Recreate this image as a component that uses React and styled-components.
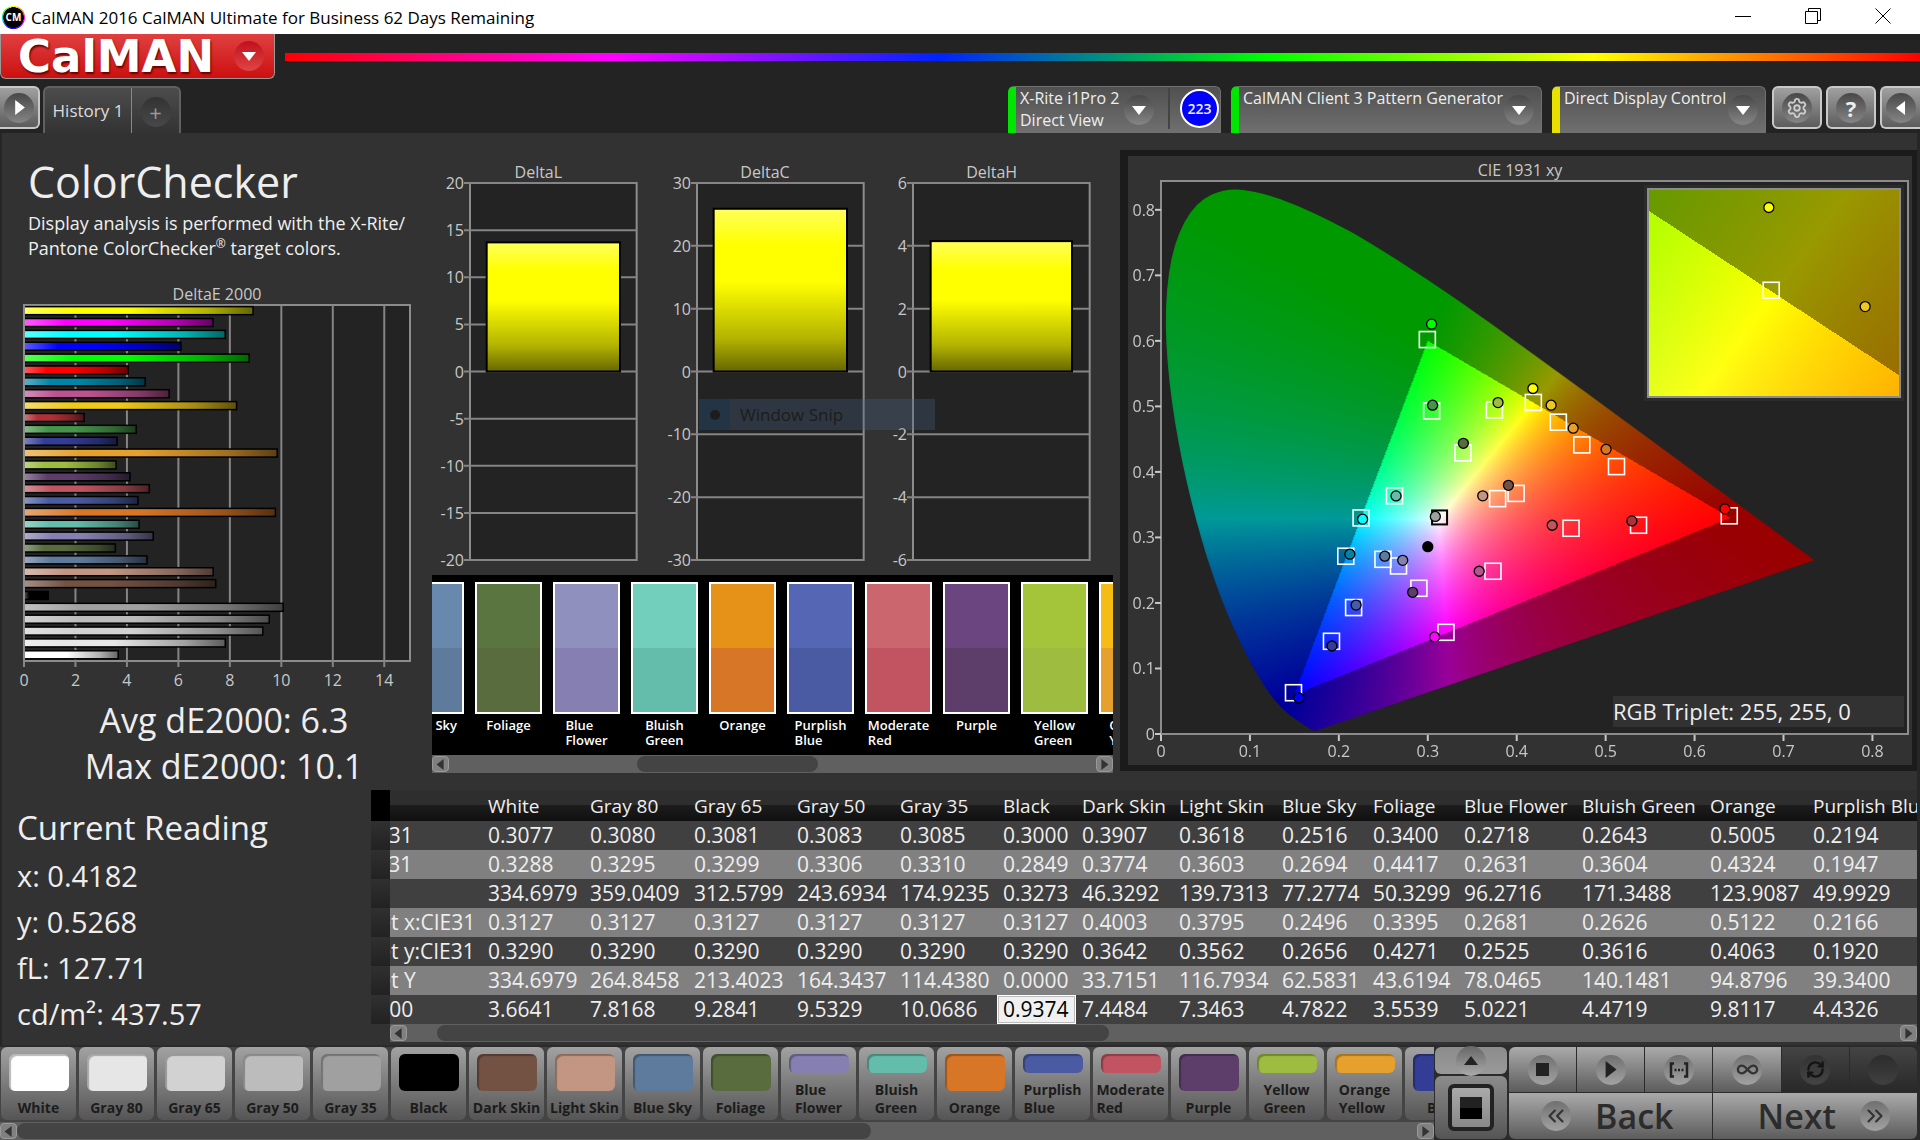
import React, { useEffect, useRef } from 'react'
import styled, { createGlobalStyle } from 'styled-components'
import { ChevronsLeft, ChevronsRight, Infinity as Loop, RefreshCw, Settings } from 'lucide-react'

const Global = createGlobalStyle`
    * { box-sizing: border-box; }
    body {
        margin: 0;
        background: #323232;
        font-family: "Open Sans", "Noto Sans", sans-serif;
        color: #eee;
        overflow-x: hidden;
    }
    button { font: inherit; color: inherit; border: 0; padding: 0; cursor: pointer; }
    svg text { fill: #c8c8c8; font-size: 16px; }
`

const Page = styled.div`
    display: flex;
    flex-direction: column;
    min-height: 100vh;
    overflow: hidden;
`

/* ---------- title bar ---------- */
const TitleBar = styled.header`
    display: flex;
    align-items: center;
    height: 34px;
    padding-left: 2px;
    background: #fff;
    color: #000;
    font-size: 17px;
`
const AppBadge = styled.span`
    display: flex;
    align-items: center;
    justify-content: center;
    width: 23px;
    height: 23px;
    margin-right: 6px;
    border-radius: 50%;
    background: radial-gradient(#000 62%, transparent 64%),
        conic-gradient(#ff0, #f60, #f0f, #60f, #00f, #0cf, #0f0, #ff0);
    color: #fff;
    font-size: 10px;
    font-weight: 700;
`
const WindowButtons = styled.div`
    display: flex;
    margin-left: auto;
    padding-right: 2px;
`
const WindowButton = styled.button`
    width: 70px;
    height: 34px;
    background: none;
`

/* ---------- top strip ---------- */
const Top = styled.div`
    background: #232323;
`
const BrandRow = styled.div`
    display: flex;
    align-items: center;
    height: 45px;
`
const Brand = styled.button`
    display: flex;
    align-items: center;
    justify-content: space-between;
    width: 275px;
    height: 45px;
    margin-right: 10px;
    padding: 0 10px 0 17px;
    border: 1px solid #999;
    border-top: 0;
    border-radius: 0 0 6px 6px;
    background: linear-gradient(#e04040, #cc1010);
    color: #fff;
    font-family: "DejaVu Sans", sans-serif;
    font-size: 45px;
    line-height: 43px;
    font-weight: 700;
    text-shadow: 1px 2px 2px #600;
`
const Rainbow = styled.div`
    flex: 1;
    height: 8px;
    background: linear-gradient(90deg, #f00, #f0f 20%, #02f 40%, #0f0 60%, #ff0 80%, #f00);
`
const Round = styled.span`
    display: flex;
    flex: none;
    align-items: center;
    justify-content: center;
    width: 30px;
    height: 30px;
    border-radius: 50%;
    background: ${p => p.$fill || 'linear-gradient(#484848, #858585)'};
    color: ${p => p.$color || '#fff'};
    font-size: 22px;
`
const TabRow = styled.div`
    display: flex;
    align-items: flex-start;
    height: 54px;
    padding-top: 7px;
`
const Tabs = styled.div`
    display: flex;
    height: 47px;
    margin: 0 auto 0 3px;
    border: 2px solid #606060;
    border-bottom: 0;
    border-radius: 6px 6px 0 0;
    background: linear-gradient(#4c4c4c, #333);
`
const Tab = styled.button`
    display: flex;
    align-items: center;
    justify-content: center;
    width: ${p => p.$width}px;
    padding-top: ${p => (p.$split ? 3 : 0)}px;
    background: none;
    border-left: ${p => (p.$split ? '1px solid #888' : 0)};
    color: #ddd;
    font-size: 17px;
`
const Source = styled.button`
    display: flex;
    width: ${p => p.$width}px;
    height: 47px;
    margin-right: ${p => p.$gap}px;
    padding-right: 7px;
    border: 1px solid #707070;
    border-bottom: 0;
    border-left: 8px solid ${p => p.$lamp};
    border-radius: 6px 6px 0 0;
    background: linear-gradient(#505050, #707070);
    font-size: 16px;
    line-height: 22px;
    text-align: left;
    white-space: nowrap;
`
const SourceName = styled.span`
    flex: 1;
    min-width: 0;
    padding-left: 4px;
`
const SourceCaret = styled.span`
    padding-top: 8px;
`
const Count = styled.span`
    display: flex;
    align-items: center;
    height: 41px;
    margin: 1px -6px 0 14px;
    padding-left: 10px;
    border-left: 2px solid #444;

    span {
        width: 39px;
        height: 39px;
        border: 2px solid #fff;
        border-radius: 50%;
        background: #00f;
        font-size: 14px;
        font-weight: 600;
        line-height: 35px;
        text-align: center;
    }
`
const ToolButton = styled.button`
    display: flex;
    align-items: center;
    justify-content: center;
    width: ${p => p.$width}px;
    height: 43px;
    margin-left: ${p => p.$gap || 0}px;
    border: 2px solid #c8c8c8;
    border-radius: ${p => p.$radius || '6px'};
    border-left-width: ${p => (p.$flush === 'left' ? 0 : 2)}px;
    border-right-width: ${p => (p.$flush === 'right' ? 0 : 2)}px;
    background: linear-gradient(#a0a0a0, #5c5c5c);
`

/* ---------- work area ---------- */
const Work = styled.main`
    flex: 1;
    border: solid #262626;
    border-width: 0 3px 0 2px;
    background: #323232;
`
const Upper = styled.div`
    display: grid;
    grid-template-columns: 423fr 695fr 797fr;
    min-height: 657px;
`
const Summary = styled.section`
    min-width: 0;
    padding: 20px 15px 0 22px;
`
const Heading = styled.h1`
    margin: 0 0 0 4px;
    font-size: 43px;
    line-height: 58px;
    font-weight: 400;
`
const Intro = styled.p`
    margin: 0 -15px 22px 4px;
    font-size: 18px;
    line-height: 25px;
    white-space: nowrap;

    sup { font-size: 12px; line-height: 0; }
`
const ChartTitle = styled.h2`
    margin: 0;
    color: #c8c8c8;
    font-size: 16px;
    line-height: 22px;
    font-weight: 400;
    text-align: center;
`
const Plot = styled.svg`
    display: block;
    width: 100%;
    height: ${p => p.$height}px;
    overflow: visible;
`
const Totals = styled.div`
    margin-top: 36px;
    padding-left: 14px;
    font-size: 34px;
    line-height: 46px;
    text-align: center;
`
const Middle = styled.section`
    position: relative;
    min-width: 0;
    padding-top: 28px;
`
const Deltas = styled.div`
    display: grid;
    grid-template-columns: repeat(3, 1fr);
    margin: 0 15px 15px 0;
`
const DeltaBody = styled.div`
    padding: 0 15px 0 ${p => p.$axis}px;
`
const Snip = styled.div`
    position: absolute;
    top: 266px;
    left: 274px;
    display: flex;
    align-items: center;
    width: 236px;
    height: 31px;
    background: rgba(70, 100, 130, 0.32);
    color: #1c1c1c;
    font-size: 17px;
`
const SnipMark = styled.span`
    width: 31px;
    height: 31px;
    margin-right: 10px;
    padding: 11px;
    background: rgba(20, 50, 75, 0.4);

    &::before {
        content: '';
        display: block;
        width: 10px;
        height: 10px;
        border-radius: 50%;
        background: #1c1c1c;
    }
`
const Strip = styled.div`
    margin: 0 7px;
    background: #000;
`
const Cards = styled.div`
    display: flex;
    gap: 11px;
    height: 180px;
    padding: 7px 0 0;
    overflow: hidden;
`
const Card = styled.div`
    flex: none;
    width: 67px;
    margin-left: ${p => (p.$first ? -35 : 0)}px;
    display: flex;
    flex-direction: column;
    align-items: center;
    color: #fff;
    font-size: 13px;
    line-height: 15px;
    font-weight: 600;
`
const Pair = styled.div`
    width: 67px;
    height: 132px;
    margin-bottom: 4px;
    border: 2px solid #fff;
    background: linear-gradient(${p => p.$got} 50%, ${p => p.$want} 50%);
`

const ScrollTrack = styled.div`
    display: flex;
    align-items: center;
    justify-content: space-between;
    height: 18px;
    background: #606060;
`
const ScrollSpace = styled.div`
    display: flex;
    flex: 1;
`
const ScrollThumb = styled.div`
    width: ${p => p.$size}%;
    height: 16px;
    margin-left: ${p => p.$start}%;
    border-radius: 8px;
    background: #444;
`
const ScrollArrow = styled.button`
    display: flex;
    align-items: center;
    justify-content: center;
    width: 17px;
    height: 16px;
    border: 1px solid #999;
    border-radius: 4px;
    background: #808080;
`

const Gamut = styled.section`
    min-width: 0;
    height: 621px;
    margin-top: 17px;
    padding: 3px 4px 0 33px;
    border: solid #1b1b1b;
    border-width: 6px 5px 6px 8px;
`
const GamutTitle = styled(ChartTitle)`
    padding-right: 29px;
`
const GamutPlot = styled.div`
    position: relative;
    height: 553px;
    background: #232323;
`
const Field = styled.canvas`
    position: absolute;
    inset: 0;
    width: 100%;
    height: 100%;
`
const Overlay = styled(Plot)`
    position: absolute;
    inset: 0;
`
const Inset = styled.div`
    position: absolute;
    top: 7px;
    right: 7px;
    width: 254px;
    height: 210px;
    border: 2px solid #8c8c8c;
    outline: 3px solid #2b2b2b;
    overflow: hidden;
`
const Triplet = styled.div`
    position: absolute;
    right: 4px;
    bottom: 7px;
    width: 291px;
    background: #323232;
    font-size: 22px;
    line-height: 31px;
`

const Lower = styled.div`
    display: flex;
    align-items: flex-start;
`
const Reading = styled.section`
    flex: none;
    width: 369px;
    padding: 13px 0 0 15px;

    h2 { margin: 0; font-size: 33px; line-height: 50px; font-weight: 400; }
    p { margin: 0; font-size: 29px; line-height: 46px; }
`
const Sheet = styled.div`
    flex: 1;
    min-width: 0;
    overflow: hidden;
`
const Grid = styled.table`
    table-layout: fixed;
    width: 1559px;
    border-collapse: collapse;
    font-size: 21px;
    white-space: nowrap;
`
const HeadRow = styled.tr`
    height: 31px;
    background: linear-gradient(#2e2e2e 50%, #1c1c1c 50%, #101010);

    th {
        padding: 2px 0 0 6px;
        overflow: hidden;
        font-size: 19px;
        line-height: 29px;
        font-weight: 500;
        text-align: left;
    }
    th:first-child { background: #000; }
`
const Row = styled.tr`
    height: 29px;
    background: ${p => (p.$light ? '#808080' : '#404040')};

    th, td {
        height: 29px;
        padding: 0 0 0 6px;
        overflow: hidden;
        line-height: 29px;
        font-weight: 400;
        text-align: left;
    }
    td:first-child { background: linear-gradient(#303030, #222); }
    th { padding-left: 0; text-indent: -54px; }
`
const Cell = styled.td`
    background: ${p => (p.$active ? '#f0f0f0' : 'none')};
    color: ${p => (p.$active ? '#000' : 'inherit')};
    box-shadow: ${p => (p.$active ? 'inset 0 0 0 1px #fff, inset 0 0 0 2px #bbb' : 'none')};
`
const SheetScroll = styled.div`
    margin-left: 19px;
`

/* ---------- bottom bar ---------- */
const Bottom = styled.footer`
    display: flex;
    height: 95px;
    padding: 2px 3px 0 0;
    background: #2b2b2b;
    color: #222;
`
const Patches = styled.div`
    flex: 1;
    min-width: 0;
`
const PatchRow = styled.div`
    display: flex;
    gap: 3px;
    height: 75px;
    padding-left: 1px;
    overflow: hidden;
    background: #444;
`
const Patch = styled.button`
    display: flex;
    flex: none;
    flex-direction: column;
    align-items: center;
    justify-content: space-between;
    width: 75px;
    height: 73px;
    padding: 7px 0 3px;
    border-radius: 6px;
    background: linear-gradient(#a2a2a2, #555);
    color: #1c1c1c;
    font-size: 14px;
    line-height: 18px;
    font-weight: 700;
    text-align: left;
    white-space: pre;
`
const Chip = styled.span`
    width: 60px;
    height: ${p => (p.$short ? 19 : 37)}px;
    border-radius: 6px;
    background: ${p => p.$color};
    box-shadow: inset 2px 2px 1px rgba(0, 0, 0, 0.28);
`
const Pick = styled.div`
    display: flex;
    flex-direction: column;
    gap: 2px;
    width: 72px;
    margin: 0 2px 0 1px;
`
const PickButton = styled.button`
    display: flex;
    align-items: center;
    justify-content: center;
    height: ${p => p.$height}px;
    border-radius: 6px;
    background: linear-gradient(${p => p.$from}, ${p => p.$to});
`
const PickFrame = styled.span`
    display: flex;
    align-items: center;
    justify-content: center;
    width: 46px;
    height: 47px;
    border: 4px solid #222;
    border-radius: 6px;
    background: linear-gradient(#aaa, #888);

    &::before {
        content: '';
        width: 22px;
        height: 22px;
        background: linear-gradient(#222 50%, #000 50%);
    }
`
const Transport = styled.div`
    display: grid;
    grid-template-columns: repeat(6, 1fr);
    grid-template-rows: 45px 46px;
    gap: 1px;
    width: 408px;
`
const Key = styled.button`
    display: flex;
    align-items: center;
    justify-content: center;
    gap: 24px;
    grid-column: span ${p => p.$span || 1};
    border-radius: ${p => p.$radius || 0};
    background: ${p => (p.$off ? 'linear-gradient(#444, #282828)' : 'linear-gradient(#aaa, #5c5c5c)')};
    color: #2c2c2c;
    font-size: 34px;
    line-height: 40px;
    font-weight: 600;
`
const BackKey = styled(Key)`
    justify-content: flex-start;
    padding-left: 32px;
`
const NextKey = styled(Key)`
    justify-content: flex-end;
    padding-right: 27px;
`

/* ---------- data ---------- */
const deltaE = [
    ['#ff0', 8.9], ['#f0f', 7.34], ['#0ff', 7.82], ['#00f', 6.1], ['#0f0', 8.75], ['#f00', 4.05],
    ['#0085a6', 4.71], ['#bb5292', 5.64], ['#eec81b', 8.26], ['#af3138', 2.34], ['#469449', 4.36],
    ['#343d96', 3.62], ['#e6a02e', 9.84], ['#9dbc40', 3.58], ['#5d3e6b', 4.12], ['#c15460', 4.87],
    ['#4a5ba3', 4.43], ['#d87628', 9.77], ['#64bdaa', 4.47], ['#8580b1', 5.02], ['#586c3e', 3.55],
    ['#5e7a9c', 4.78], ['#c29682', 7.35], ['#735244', 7.45], ['#000', 0.94], ['#a0a0a0', 10.07],
    ['#bcbcbc', 9.53], ['#d2d2d2', 9.28], ['#e6e6e6', 7.82], ['#fff', 3.66],
]

const deltas = [
    { name: 'DeltaL', max: 20, step: 5, value: 13.7, axis: 45 },
    { name: 'DeltaC', max: 30, step: 10, value: 25.9, axis: 45 },
    { name: 'DeltaH', max: 6, step: 2, value: 4.15, axis: 35 },
]

const pairs = [
    ['Blue Sky', '#6988ad', '#5e7a9c'],
    ['Foliage', '#5b7540', '#586c3e'],
    ['Blue\nFlower', '#8f90bd', '#8580b1'],
    ['Bluish\nGreen', '#72cfbb', '#64bdaa'],
    ['Orange', '#e69118', '#d87628'],
    ['Purplish\nBlue', '#5566b4', '#4a5ba3'],
    ['Moderate\nRed', '#cb666f', '#c15460'],
    ['Purple', '#6b457f', '#5d3e6b'],
    ['Yellow\nGreen', '#a4c539', '#9dbc40'],
    ['Orange\nYellow', '#f6bb15', '#e6a02e'],
]

const patches = [
    ['White', '#fff'], ['Gray 80', '#e6e6e6'], ['Gray 65', '#d2d2d2'], ['Gray 50', '#bcbcbc'],
    ['Gray 35', '#a0a0a0'], ['Black', '#000'], ['Dark Skin', '#735244'], ['Light Skin', '#c29682'],
    ['Blue Sky', '#5e7a9c'], ['Foliage', '#586c3e'], ['Blue\nFlower', '#8580b1'],
    ['Bluish\nGreen', '#64bdaa'], ['Orange', '#d87628'], ['Purplish\nBlue', '#4a5ba3'],
    ['Moderate\nRed', '#c15460'], ['Purple', '#5d3e6b'], ['Yellow\nGreen', '#9dbc40'],
    ['Orange\nYellow', '#e6a02e'], ['Blue', '#343d96'],
]

const columns = [
    ['White', 102], ['Gray 80', 104], ['Gray 65', 103], ['Gray 50', 103], ['Gray 35', 103],
    ['Black', 79], ['Dark Skin', 97], ['Light Skin', 103], ['Blue Sky', 91], ['Foliage', 91],
    ['Blue Flower', 118], ['Bluish Green', 128], ['Orange', 103], ['Purplish Blue', 123],
]

const rows = [
    ['x: CIE31', '0.3077 0.3080 0.3081 0.3083 0.3085 0.3000 0.3907 0.3618 0.2516 0.3400 0.2718 0.2643 0.5005 0.2194'],
    ['y: CIE31', '0.3288 0.3295 0.3299 0.3306 0.3310 0.2849 0.3774 0.3603 0.2694 0.4417 0.2631 0.3604 0.4324 0.1947'],
    ['Y', '334.6979 359.0409 312.5799 243.6934 174.9235 0.3273 46.3292 139.7313 77.2774 50.3299 96.2716 171.3488 123.9087 49.9929'],
    ['Target x:CIE31', '0.3127 0.3127 0.3127 0.3127 0.3127 0.3127 0.4003 0.3795 0.2496 0.3395 0.2681 0.2626 0.5122 0.2166'],
    ['Target y:CIE31', '0.3290 0.3290 0.3290 0.3290 0.3290 0.3290 0.3642 0.3562 0.2656 0.4271 0.2525 0.3616 0.4063 0.1920'],
    ['Target Y', '334.6979 264.8458 213.4023 164.3437 114.4380 0.0000 33.7151 116.7934 62.5831 43.6194 78.0465 140.1481 94.8796 39.3400'],
    ['ΔE  2000', '3.6641 7.8168 9.2841 9.5329 10.0686 0.9374 7.4484 7.3463 4.7822 3.5539 5.0221 4.4719 9.8117 4.4326'],
]

const targets = [
    [0.2995, 0.602], [0.3043, 0.493], [0.375, 0.4946], [0.4187, 0.506], [0.4468, 0.4759],
    [0.4732, 0.4412], [0.5122, 0.4081], [0.3395, 0.4291], [0.2626, 0.3636], [0.225, 0.3298],
    [0.3993, 0.3672], [0.3785, 0.3592], [0.4611, 0.314], [0.537, 0.3186], [0.639, 0.333],
    [0.2078, 0.2713], [0.2496, 0.2666], [0.2671, 0.2565], [0.29, 0.2224], [0.3733, 0.2484],
    [0.2166, 0.193], [0.1917, 0.1415], [0.3204, 0.1552], [0.149, 0.063],
]

const measured = [
    [0.3043, 0.6255, '#0f0'], [0.3054, 0.5018, '#469449'], [0.379, 0.5058, '#9dbc40'],
    [0.4182, 0.5273, '#ff0'], [0.4387, 0.5018, '#eec81b'], [0.4635, 0.4667, '#e6a02e'],
    [0.5005, 0.4345, '#d87628'], [0.34, 0.4437, '#586c3e'], [0.2643, 0.3634, '#64bdaa'],
    [0.2267, 0.3278, '#0ff'], [0.3085, 0.332, '#a0a0a0'], [0.3, 0.2859, '#000'],
    [0.3907, 0.3795, '#735244'], [0.3618, 0.3635, '#c29682'], [0.4399, 0.3186, '#c15460'],
    [0.5295, 0.3252, '#af3138'], [0.6341, 0.3435, '#f00'], [0.2124, 0.2744, '#0085a6'],
    [0.2516, 0.2714, '#5e7a9c'], [0.2718, 0.2651, '#8580b1'], [0.283, 0.2163, '#5d3e6b'],
    [0.3578, 0.2484, '#bb5292'], [0.2194, 0.1967, '#4a5ba3'], [0.1922, 0.1343, '#343d96'],
    [0.3077, 0.1481, '#f0f'], [0.155, 0.055, '#00f'],
]

// spectral locus, 380nm to 700nm
const locus = [
    [0.1741, 0.005], [0.1714, 0.0051], [0.1689, 0.0069], [0.1644, 0.0109], [0.1566, 0.0177],
    [0.144, 0.0297], [0.1355, 0.0399], [0.1241, 0.0578], [0.1096, 0.0868], [0.0913, 0.1327],
    [0.0687, 0.2007], [0.0454, 0.295], [0.0235, 0.4127], [0.0082, 0.5384], [0.0039, 0.6548],
    [0.0139, 0.7502], [0.0389, 0.812], [0.0743, 0.8338], [0.1142, 0.8262], [0.1547, 0.8059],
    [0.1929, 0.7816], [0.2296, 0.7543], [0.3016, 0.6923], [0.3731, 0.6245], [0.4441, 0.5547],
    [0.5125, 0.4866], [0.5752, 0.4242], [0.627, 0.3725], [0.6658, 0.334], [0.6915, 0.3083],
    [0.719, 0.2809], [0.7347, 0.2653],
]

const fullView = { x0: 0, x1: 0.84, y0: 0, y1: 0.844 }
const insetView = { x0: 0.3927, x1: 0.4459, y0: 0.4788, y1: 0.5318 }

//fully bright rgb for a chromaticity, dimmed when it is out of gamut
const colorAt = (x, y) => {
    const X = x / y
    const Z = (1 - x - y) / y
    const lin = [
        3.2406 * X - 1.5372 - 0.4986 * Z,
        -0.9689 * X + 1.8758 + 0.0415 * Z,
        0.0557 * X - 0.204 + 1.057 * Z,
    ]
    const top = Math.max(...lin)
    const dim = Math.min(...lin) < 0 ? 0.6 : 1
    return lin.map(v => (255 * dim * Math.max(v, 0)) / top)
}

const ColorField = ({ view, width, height, clip }) => {
    const ref = useRef(null)
    useEffect(() => {
        const ctx = ref.current.getContext('2d')
        const img = ctx.createImageData(width, height)
        for (let j = 0; j < height; j++) {
            for (let i = 0; i < width; i++) {
                const x = view.x0 + ((i + 0.5) / width) * (view.x1 - view.x0)
                const y = view.y1 - ((j + 0.5) / height) * (view.y1 - view.y0)
                const [r, g, b] = colorAt(x, y)
                const at = (j * width + i) * 4
                img.data[at] = r
                img.data[at + 1] = g
                img.data[at + 2] = b
                img.data[at + 3] = 255
            }
        }
        ctx.putImageData(img, 0, 0)
        if (clip) {
            const pts = locus.map(([x, y]) => [
                ((x - view.x0) / (view.x1 - view.x0)) * width,
                ((view.y1 - y) / (view.y1 - view.y0)) * height,
            ])
            ctx.globalCompositeOperation = 'destination-in'
            ctx.beginPath()
            ctx.moveTo(...pts[0])
            for (let n = 1; n < pts.length - 1; n++) {
                const [ax, ay] = pts[n]
                const [bx, by] = pts[n + 1]
                ctx.quadraticCurveTo(ax, ay, (ax + bx) / 2, (ay + by) / 2)
            }
            ctx.lineTo(...pts[pts.length - 1])
            ctx.closePath()
            ctx.fill()
            ctx.globalCompositeOperation = 'source-over'
        }
    }, [view, width, height, clip])
    return <Field ref={ref} width={width} height={height} />
}

const Marks = ({ view }) => {
    const px = x => `${((x - view.x0) / (view.x1 - view.x0)) * 100}%`
    const py = y => `${((view.y1 - y) / (view.y1 - view.y0)) * 100}%`
    return (
        <>
            {targets.map(([x, y]) => (
                <rect key={`${x}${y}`} x={px(x)} y={py(y)} width="16" height="16" transform="translate(-8 -8)"
                    fill="none" stroke="#fff" strokeWidth="1.6" />
            ))}
            <rect x={px(0.3127)} y={py(0.329)} width="15" height="14" transform="translate(-7 -8)"
                fill="none" stroke="#000" strokeWidth="2" />
            {measured.map(([x, y, c]) => (
                <circle key={`${x}${y}`} cx={px(x)} cy={py(y)} r="5" fill={c} stroke="#000" strokeWidth="1.3" />
            ))}
        </>
    )
}

const Arrow = ({ dir, size = 14, color = '#fff' }) => {
    const turn = { down: 0, left: 90, up: 180, right: 270 }[dir]
    return (
        <svg width={size} height={size} viewBox="0 0 14 14" aria-hidden="true">
            <path d="M0 3h14L7 12z" fill={color} transform={`rotate(${turn} 7 7)`} />
        </svg>
    )
}

const Scroll = ({ start, size }) => (
    <ScrollTrack>
        <ScrollArrow aria-label="Scroll left"><Arrow dir="left" size={11} color="#333" /></ScrollArrow>
        <ScrollSpace><ScrollThumb $start={start} $size={size} /></ScrollSpace>
        <ScrollArrow aria-label="Scroll right"><Arrow dir="right" size={11} color="#333" /></ScrollArrow>
    </ScrollTrack>
)

const Shine = ({ id, vertical }) => (
    <linearGradient id={id} x2={vertical ? 0 : 1} y2={vertical ? 1 : 0}>
        <stop offset="0" stopColor="#fff" stopOpacity="0.36" />
        <stop offset="0.22" stopColor="#fff" stopOpacity="0" />
        <stop offset="0.45" stopColor="#000" stopOpacity="0" />
        <stop offset="0.8" stopColor="#000" stopOpacity="0.3" />
        <stop offset="1" stopColor="#000" stopOpacity="0.6" />
    </linearGradient>
)

const DeltaEChart = () => (
    <Plot $height={356}>
        <defs><Shine id="shineRow" /></defs>
        <rect width="100%" height="100%" fill="#232323" stroke="#8c8c8c" strokeWidth="2" />
        {[0, 2, 4, 6, 8, 10, 12, 14].map(n => (
            <g key={n}>
                <line x1={`${(n / 15) * 100}%`} x2={`${(n / 15) * 100}%`} y1="0" y2="362" stroke="#858585" strokeWidth="2" />
                <text x={`${(n / 15) * 100}%`} y="381" textAnchor="middle">{n}</text>
            </g>
        ))}
        {deltaE.map(([color, value], i) => {
            const box = { y: `${((i + 0.14) / 30) * 100}%`, width: `${(value / 15) * 100}%`, height: 8 }
            return (
                <g key={color}>
                    <rect {...box} fill={color} />
                    <rect {...box} fill="url(#shineRow)" stroke="#000" strokeWidth="1.5" />
                </g>
            )
        })}
        <line x1="0" x2="0" y1="0" y2="100%" stroke="#8c8c8c" strokeWidth="2" />
    </Plot>
)

const DeltaChart = ({ name, max, step, value, axis }) => {
    const ticks = []
    for (let n = max; n >= -max; n -= step) ticks.push(n)
    const at = n => `${((max - n) / (2 * max)) * 100}%`
    return (
        <div>
            <ChartTitle>{name}</ChartTitle>
            <DeltaBody $axis={axis}>
                <Plot $height={377}>
                    <defs><Shine id={`shine${name}`} vertical /></defs>
                    <rect width="100%" height="100%" fill="#232323" stroke="#8c8c8c" strokeWidth="2" />
                    {ticks.map(n => (
                        <g key={n}>
                            <line x1="-6" x2="100%" y1={at(n)} y2={at(n)} stroke="#858585" strokeWidth="2" />
                            <text x="-6" y={at(n)} dy="6" textAnchor="end">{n}</text>
                        </g>
                    ))}
                    <rect x="10%" width="80%" y={at(value)} height={`${(value / max) * 50}%`} fill="#ff0" />
                    <rect x="10%" width="80%" y={at(value)} height={`${(value / max) * 50}%`}
                        fill={`url(#shine${name})`} stroke="#000" strokeWidth="2" />
                </Plot>
            </DeltaBody>
        </div>
    )
}

const GamutChart = () => {
    const ticks = [0, 0.1, 0.2, 0.3, 0.4, 0.5, 0.6, 0.7, 0.8]
    return (
        <Gamut>
            <GamutTitle>CIE 1931 xy</GamutTitle>
            <GamutPlot>
                <ColorField view={fullView} width={746} height={553} clip />
                <Overlay $height={553}>
                    <rect width="100%" height="100%" fill="none" stroke="#8c8c8c" strokeWidth="2" />
                    {ticks.map(n => (
                        <g key={n}>
                            <line x1={`${(n / 0.84) * 100}%`} x2={`${(n / 0.84) * 100}%`} y1="554" y2="560" stroke="#c8c8c8" strokeWidth="2" />
                            <text x={`${(n / 0.84) * 100}%`} y="576" textAnchor="middle">{n}</text>
                            <line x1="-6" x2="0" y1={`${(1 - n / 0.844) * 100}%`} y2={`${(1 - n / 0.844) * 100}%`} stroke="#c8c8c8" strokeWidth="2" />
                            <text x="-6" y={`${(1 - n / 0.844) * 100}%`} dy="6" textAnchor="end">{n}</text>
                        </g>
                    ))}
                    <Marks view={fullView} />
                </Overlay>
                <Inset>
                    <ColorField view={insetView} width={250} height={206} />
                    <Overlay $height={206}><Marks view={insetView} /></Overlay>
                </Inset>
                <Triplet>RGB Triplet: 255, 255, 0</Triplet>
            </GamutPlot>
        </Gamut>
    )
}

const keyFill = 'linear-gradient(#707070, #a2a2a2)'

const App = () => (
    <Page>
        <Global />
        <TitleBar>
            <AppBadge>CM</AppBadge>
            CalMAN 2016 CalMAN Ultimate for Business 62 Days Remaining
            <WindowButtons>
                <WindowButton aria-label="Minimize">
                    <svg width="16" height="16"><path d="M0 8.5h16" stroke="#000" /></svg>
                </WindowButton>
                <WindowButton aria-label="Restore">
                    <svg width="16" height="16" fill="none" stroke="#000"><path d="M.5 3.5h12v12H.5zM3.500 3V.5h12v12H13" /></svg>
                </WindowButton>
                <WindowButton aria-label="Close">
                    <svg width="16" height="16"><path d="M.5.5l15 15M15.500.5l-15 15" stroke="#000" /></svg>
                </WindowButton>
            </WindowButtons>
        </TitleBar>

        <Top>
            <BrandRow>
                <Brand>
                    CalMAN
                    <Round $fill="linear-gradient(#c0101c, #e04545)"><Arrow dir="down" /></Round>
                </Brand>
                <Rainbow />
            </BrandRow>
            <TabRow>
                <ToolButton $width={40} $flush="left" $radius="0 6px 6px 0" aria-label="Open panel">
                    <Round><Arrow dir="right" size={15} /></Round>
                </ToolButton>
                <Tabs>
                    <Tab $width={86}>History 1</Tab>
                    <Tab $width={48} $split aria-label="Add tab">
                        <Round $fill="linear-gradient(#333, #484848)" $color="#999">+</Round>
                    </Tab>
                </Tabs>
                <Source $width={213} $gap={10} $lamp="#00e600">
                    <SourceName>X-Rite i1Pro 2<br />Direct View</SourceName>
                    <SourceCaret><Round><Arrow dir="down" /></Round></SourceCaret>
                    <Count><span>223</span></Count>
                </Source>
                <Source $width={311} $gap={10} $lamp="#00e600">
                    <SourceName>CalMAN Client 3 Pattern Generator</SourceName>
                    <SourceCaret><Round><Arrow dir="down" /></Round></SourceCaret>
                </Source>
                <Source $width={214} $gap={6} $lamp="#e8e000">
                    <SourceName>Direct Display Control</SourceName>
                    <SourceCaret><Round><Arrow dir="down" /></Round></SourceCaret>
                </Source>
                <ToolButton $width={50} aria-label="Settings"><Round $color="#ccc"><Settings size={22} /></Round></ToolButton>
                <ToolButton $width={50} $gap={4} aria-label="Help"><Round $color="#eee"><b>?</b></Round></ToolButton>
                <ToolButton $width={40} $gap={4} $flush="right" $radius="6px 0 0 6px" aria-label="Close panel">
                    <Round><Arrow dir="left" /></Round>
                </ToolButton>
            </TabRow>
        </Top>

        <Work>
            <Upper>
                <Summary>
                    <Heading>ColorChecker</Heading>
                    <Intro>
                        Display analysis is performed with the X-Rite/<br />
                        Pantone ColorChecker<sup>®</sup> target colors.
                    </Intro>
                    <ChartTitle>DeltaE 2000</ChartTitle>
                    <DeltaEChart />
                    <Totals>
                        <div>Avg dE2000: 6.3</div>
                        <div>Max dE2000: 10.1</div>
                    </Totals>
                </Summary>
                <Middle>
                    <Deltas>
                        {deltas.map(d => <DeltaChart key={d.name} {...d} />)}
                    </Deltas>
                    <Snip><SnipMark />Window Snip</Snip>
                    <Strip>
                        <Cards>
                            {pairs.map(([name, got, want], i) => (
                                <Card key={name} $first={i === 0}>
                                    <Pair $got={got} $want={want} />
                                    <span>{name.split('\n').map(line => <div key={line}>{line}</div>)}</span>
                                </Card>
                            ))}
                        </Cards>
                        <Scroll start={29} size={28} />
                    </Strip>
                </Middle>
                <GamutChart />
            </Upper>

            <Lower>
                <Reading>
                    <h2>Current Reading</h2>
                    <p>x: 0.4182</p>
                    <p>y: 0.5268</p>
                    <p>fL: 127.71</p>
                    <p>cd/m²: 437.57</p>
                </Reading>
                <Sheet>
                    <Grid>
                        <colgroup>
                            <col width="19" />
                            <col width="92" />
                            {columns.map(([name, width]) => <col key={name} width={width} />)}
                        </colgroup>
                        <thead>
                            <HeadRow>
                                <th />
                                <th />
                                {columns.map(([name]) => <th key={name} scope="col">{name}</th>)}
                            </HeadRow>
                        </thead>
                        <tbody>
                            {rows.map(([name, values], r) => (
                                <Row key={name} $light={r % 2 === 1}>
                                    <td />
                                    <th scope="row">{name}</th>
                                    {values.split(' ').map((v, c) => (
                                        <Cell key={columns[c][0]} $active={r === 6 && c === 5}>{v}</Cell>
                                    ))}
                                </Row>
                            ))}
                        </tbody>
                    </Grid>
                    <SheetScroll><Scroll start={2} size={45} /></SheetScroll>
                </Sheet>
            </Lower>
        </Work>

        <Bottom>
            <Patches>
                <PatchRow>
                    {patches.map(([name, color]) => (
                        <Patch key={name}>
                            <Chip $color={color} $short={name.includes('\n')} />
                            <span>{name}</span>
                        </Patch>
                    ))}
                </PatchRow>
                <Scroll start={0} size={61} />
            </Patches>
            <Pick>
                <PickButton $height={27} $from="#8c8c8c" $to="#999" aria-label="Expand">
                    <Round $fill="linear-gradient(#666, #aaa)"><Arrow dir="up" color="#222" /></Round>
                </PickButton>
                <PickButton $height={63} $from="#8c8c8c" $to="#555" aria-label="Current patch"><PickFrame /></PickButton>
            </Pick>
            <Transport>
                <Key $radius="6px 0 0 0" aria-label="Stop">
                    <Round $fill={keyFill}><svg width="13" height="13"><path d="M0 0h13v13H0z" fill="#222" /></svg></Round>
                </Key>
                <Key aria-label="Play"><Round $fill={keyFill}><Arrow dir="right" size={17} color="#222" /></Round></Key>
                <Key aria-label="Read series">
                    <Round $fill={keyFill}>
                        <svg width="20" height="16" fill="none" stroke="#222" strokeWidth="2.500">
                            <path d="M5 1.500H2v13h3M15 1.500h3v13h-3M5.500 8h2M9 8h2M12.500 8h2" />
                        </svg>
                    </Round>
                </Key>
                <Key aria-label="Read continuous"><Round $fill={keyFill} $color="#333"><Loop size={23} strokeWidth={2.5} /></Round></Key>
                <Key $off aria-label="Refresh"><Round $fill="linear-gradient(#333, #444)" $color="#151515"><RefreshCw size={19} strokeWidth={3} /></Round></Key>
                <Key $off $radius="0 6px 0 0" aria-label="Record"><Round $fill="linear-gradient(#2c2c2c, #404040)" /></Key>
                <BackKey $span={3} $radius="0 0 0 6px">
                    <Round $fill={keyFill} $color="#333"><ChevronsLeft size={26} /></Round>Back
                </BackKey>
                <NextKey $span={3} $radius="0 0 6px 0">
                    Next<Round $fill={keyFill} $color="#333"><ChevronsRight size={26} /></Round>
                </NextKey>
            </Transport>
        </Bottom>
    </Page>
)

export default App
